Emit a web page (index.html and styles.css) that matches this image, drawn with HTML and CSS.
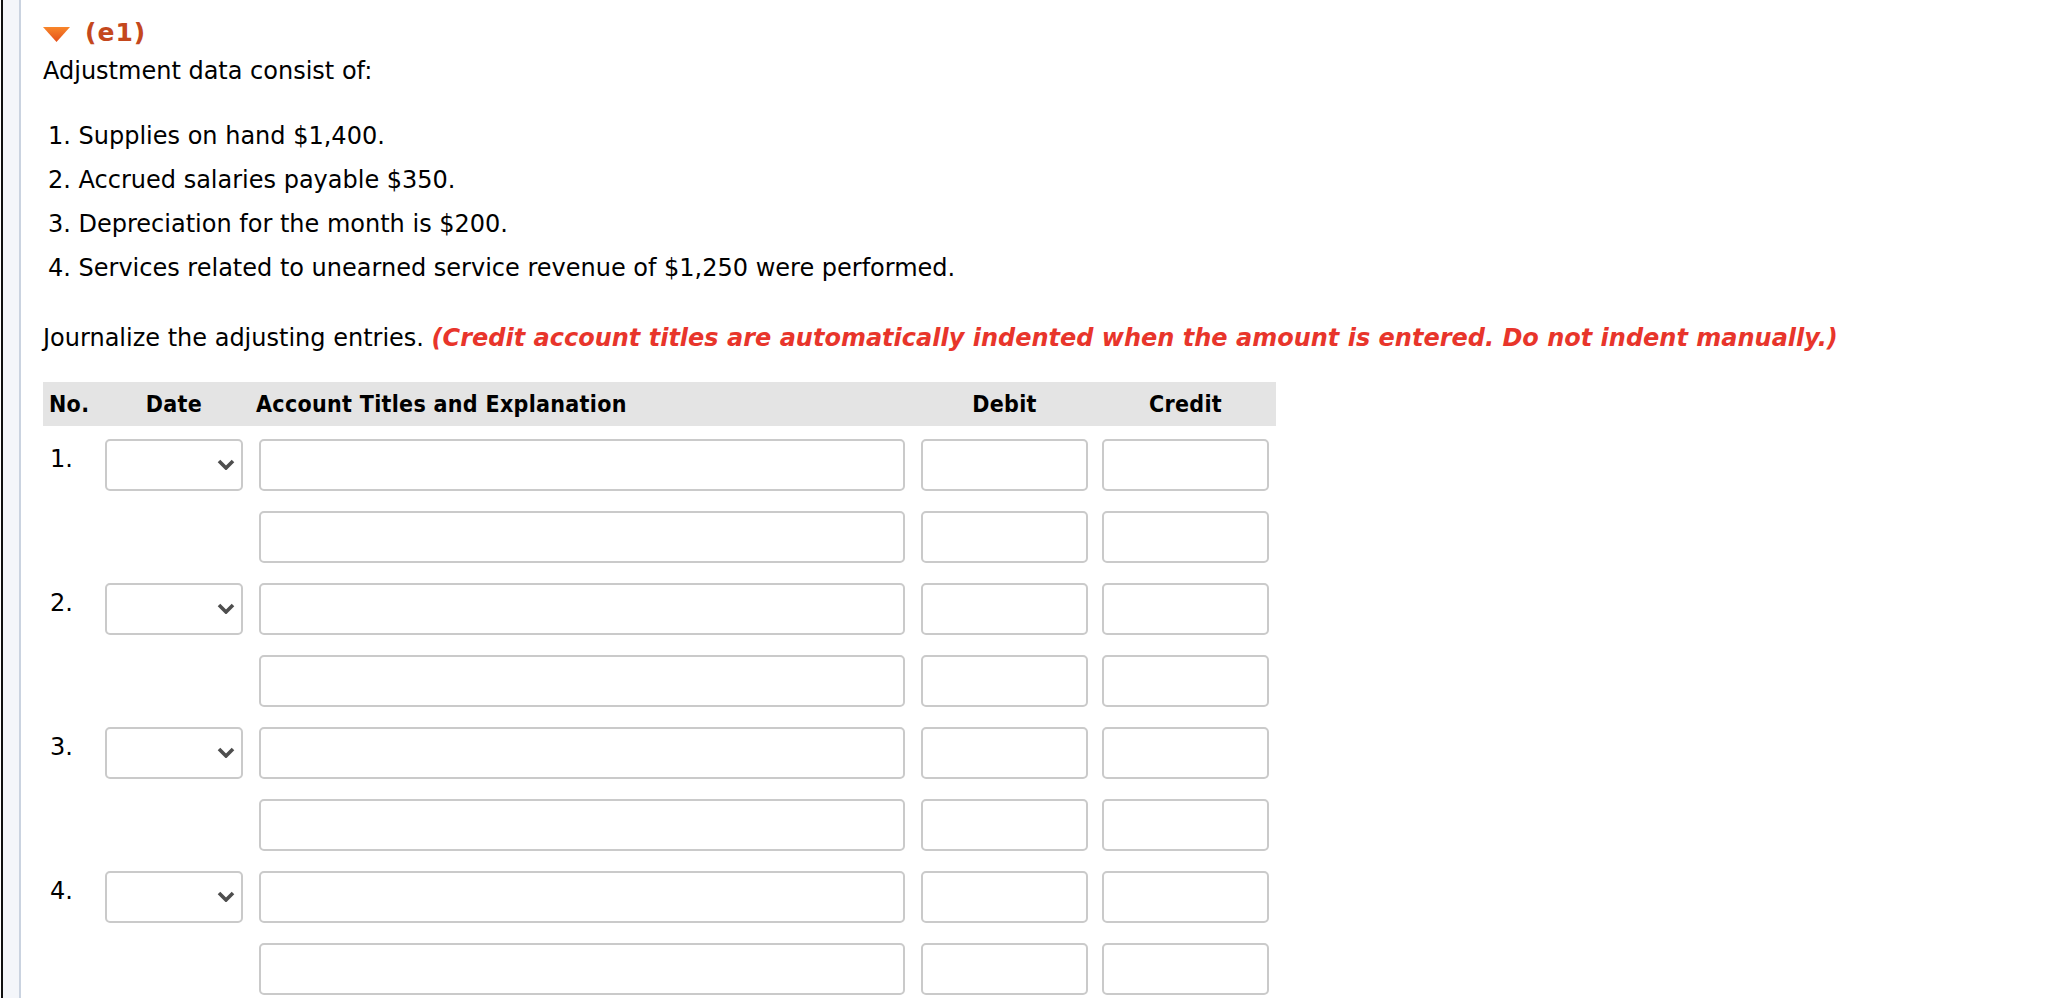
FILE: index.html
```html
<!DOCTYPE html>
<html>
<head>
<meta charset="utf-8">
<title>(e1) Adjusting entries</title>
<link rel="stylesheet" href="styles.css">
</head>
<body>
<div class="frame">
<div class="panel">

  <h2 class="part">
    <svg class="toggle" width="27" height="15" viewBox="0 0 27 15">
      <defs>
        <linearGradient id="tri" x1="0" y1="0" x2="0" y2="1">
          <stop offset="0" stop-color="#f8862a"/>
          <stop offset="1" stop-color="#e4501a"/>
        </linearGradient>
      </defs>
      <polygon points="0,0 27,0 13.5,15" fill="url(#tri)"/>
    </svg>
    <span>(e1)</span>
  </h2>

  <p class="lead">Adjustment data consist of:</p>

  <ol class="data">
    <li>Supplies on hand $1,400.</li>
    <li>Accrued salaries payable $350.</li>
    <li>Depreciation for the month is $200.</li>
    <li>Services related to unearned service revenue of $1,250 were performed.</li>
  </ol>

  <p class="lead ask">Journalize the adjusting entries. <em class="hint">(Credit account titles are automatically indented when the amount is entered. Do not indent manually.)</em></p>

  <div class="journal">
    <div class="head no">No.</div>
    <div class="head date">Date</div>
    <div class="head acct">Account Titles and Explanation</div>
    <div class="head amt">Debit</div>
    <div class="head amt">Credit</div>

    <!-- entry 1 -->
    <div class="num">1.</div>
    <div class="cell"><div class="pick"><select></select><svg class="chev" width="18" height="11" viewBox="0 0 18 11"><path d="M2 2 L9 9 L16 2" fill="none" stroke="#4e4e4e" stroke-width="3.6"/></svg></div></div>
    <div class="cell wide"><input type="text"></div>
    <div class="cell"><input type="text"></div>
    <div class="cell"><input type="text"></div>
    <div></div><div></div>
    <div class="cell wide"><input type="text"></div>
    <div class="cell"><input type="text"></div>
    <div class="cell"><input type="text"></div>

    <!-- entry 2 -->
    <div class="num">2.</div>
    <div class="cell"><div class="pick"><select></select><svg class="chev" width="18" height="11" viewBox="0 0 18 11"><path d="M2 2 L9 9 L16 2" fill="none" stroke="#4e4e4e" stroke-width="3.6"/></svg></div></div>
    <div class="cell wide"><input type="text"></div>
    <div class="cell"><input type="text"></div>
    <div class="cell"><input type="text"></div>
    <div></div><div></div>
    <div class="cell wide"><input type="text"></div>
    <div class="cell"><input type="text"></div>
    <div class="cell"><input type="text"></div>

    <!-- entry 3 -->
    <div class="num">3.</div>
    <div class="cell"><div class="pick"><select></select><svg class="chev" width="18" height="11" viewBox="0 0 18 11"><path d="M2 2 L9 9 L16 2" fill="none" stroke="#4e4e4e" stroke-width="3.6"/></svg></div></div>
    <div class="cell wide"><input type="text"></div>
    <div class="cell"><input type="text"></div>
    <div class="cell"><input type="text"></div>
    <div></div><div></div>
    <div class="cell wide"><input type="text"></div>
    <div class="cell"><input type="text"></div>
    <div class="cell"><input type="text"></div>

    <!-- entry 4 -->
    <div class="num">4.</div>
    <div class="cell"><div class="pick"><select></select><svg class="chev" width="18" height="11" viewBox="0 0 18 11"><path d="M2 2 L9 9 L16 2" fill="none" stroke="#4e4e4e" stroke-width="3.6"/></svg></div></div>
    <div class="cell wide"><input type="text"></div>
    <div class="cell"><input type="text"></div>
    <div class="cell"><input type="text"></div>
    <div></div><div></div>
    <div class="cell wide"><input type="text"></div>
    <div class="cell"><input type="text"></div>
    <div class="cell"><input type="text"></div>
  </div>

</div>
</div>
</body>
</html>
```

FILE: styles.css
```css
html, body { margin: 0; padding: 0; background: #fff; }
body { font-family: "DejaVu Sans", Verdana, sans-serif; color: #000; overflow: hidden; }

.frame { margin-left: 1px; border-left: 2px solid #111; background: #f4f6fa; min-height: 998px; }
.panel { margin-left: 16px; border-left: 2px solid #cad3e0; background: #fff; min-height: 998px;
  padding: 18px 0 0 22px; }

.part { margin: 0; height: 30px; line-height: 30px; font-size: 25px; font-weight: bold; color: #c4481d;
  letter-spacing: 1px; display: flex; align-items: center; gap: 15px; }
.part .toggle { display: block; margin-top: 3px; }

.lead { margin: 8px 0 0 0; font-size: 24px; line-height: 30px; }
.ask { margin-top: 33px; }
.hint { color: #e8352b; font-weight: bold; }

.data { margin: 28px 0 0 0; padding: 0 0 0 5px; list-style-position: inside; font-size: 24px; line-height: 44px; }

.journal { margin-top: 29px; width: 1233px; display: grid; grid-template-columns: 55px 152px 664px 181px 181px;
  row-gap: 20px; }
.head { background: #e4e4e4; height: 44px; line-height: 44px; font-family: "DejaVu Sans Condensed", "DejaVu Sans", sans-serif;
  font-weight: bold; font-size: 23px; letter-spacing: 0.3px; margin-bottom: -7px; }
.head.no { padding-left: 6px; }
.head.date, .head.amt { text-align: center; }
.head.acct { padding-left: 6px; }

.num { font-size: 24px; line-height: 29px; padding: 6px 0 0 7px; }
.cell { padding: 0 7px; }
.cell.wide { padding: 0 9px; }
.cell input, .pick select { box-sizing: border-box; width: 100%; height: 52px; margin: 0; border: 2px solid #cacaca;
  border-radius: 5px; background: #fff; font: 24px "DejaVu Sans", sans-serif; padding: 0 8px; }
.pick { position: relative; }
.pick select { appearance: none; -webkit-appearance: none; }
.chev { position: absolute; right: 8px; top: 20px; pointer-events: none; }
```
